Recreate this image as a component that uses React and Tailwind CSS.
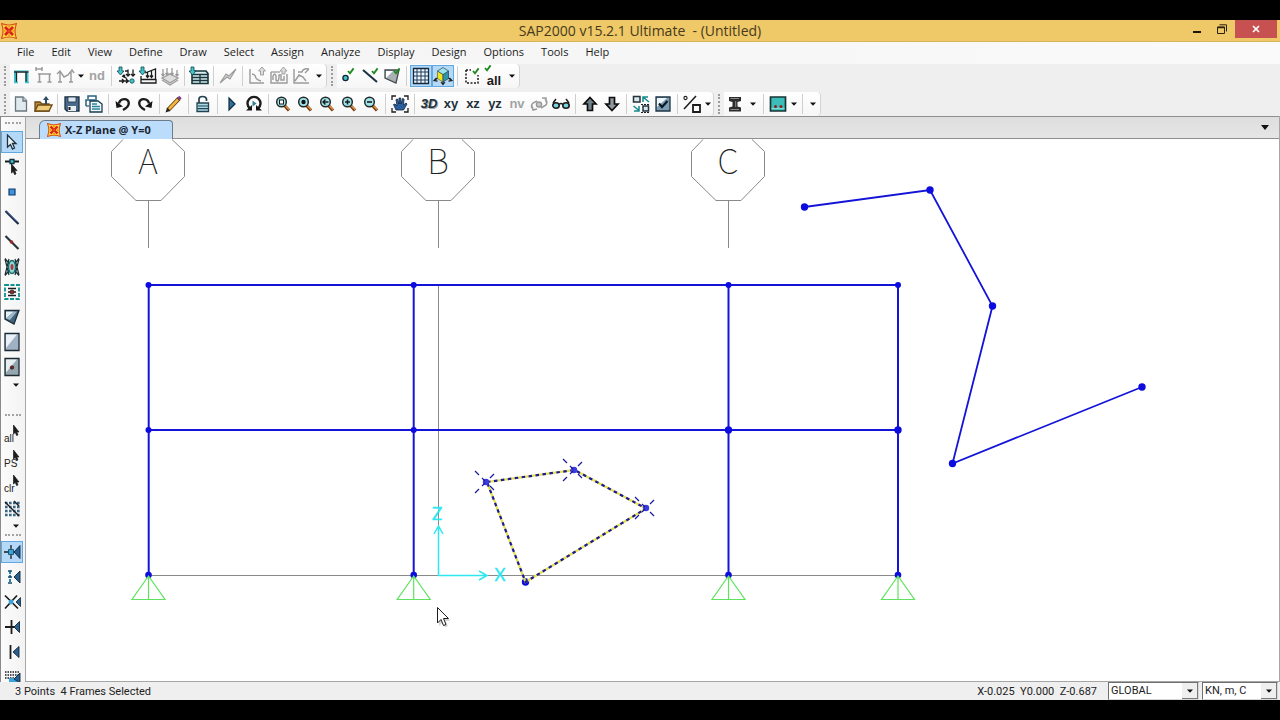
import React from "react";

/* ---------- small drawing helpers ---------- */
const Ico = ({ children }) => (
  <svg viewBox="0 0 20 20" className="block h-5 w-5 shrink-0" fill="none" stroke="#1c1c1c" strokeWidth="1.3" aria-hidden="true">
    {children}
  </svg>
);
const G = "#9a9a9a";
const CY = "#3fc4cc";
const down = (x, y, c = CY, s = "#14464c") => (
  <path d={`M${x + 2} ${y}h3v4h2l-3.5 4l-3.5 -4h2z`} fill={c} stroke={s} strokeWidth="0.8" />
);
const check = (x, y) => <path d={`M${x} ${y + 2}l2 2.4l3.6 -5`} stroke="#1d8a1d" strokeWidth="1.8" />;

const Logo = ({ className = "h-4 w-4" }) => (
  <svg viewBox="0 0 16 16" className={`block shrink-0 ${className}`} aria-hidden="true">
    <path d="M0.5 0.5Q8 3.5 15.5 0.5Q12.5 8 15.5 15.5Q8 12.5 0.5 15.5Q3.5 8 0.5 0.5Z" fill="#ffd83c" stroke="#d9531e" strokeWidth="1.2" />
    <path d="M4 4L12 12M12 4L4 12" stroke="#d8231c" strokeWidth="2.8" />
    <path d="M8 1.8L9.6 4.6H6.4ZM8 14.2L6.4 11.4H9.6ZM1.8 8L4.6 6.4V9.6ZM14.2 8L11.4 9.6V6.4Z" fill="#f59a22" />
    <circle cx="8" cy="8" r="1.6" fill="#e8481e" />
  </svg>
);

const Caret = () => (
  <svg viewBox="0 0 6 4" className="block h-1 w-1.5" aria-hidden="true">
    <path d="M0 0.5H6L3 3.8Z" fill="#111" />
  </svg>
);

const lens = (inner) => (
  <>
    <path d="M11.5 11.5L16 16.5" stroke="#7a3d12" strokeWidth="3.2" />
    <path d="M12 11.4L16 15.600" stroke="#f0a050" strokeWidth="1.2" />
    <circle cx="8.5" cy="8" r="4.8" fill="#9fe6ea" stroke="#24292c" strokeWidth="1.5" />
    {inner}
  </>
);

const icons = {
  /* define and assign row */
  portal: <><path d="M4.500 16V6.500M16 16V6.500" stroke={CY} strokeWidth="3" /><path d="M3 5H17.500" stroke={CY} strokeWidth="1.200" /><path d="M3 6H17.500M5.500 6V16M15 6V16" stroke="#17262b" /><path d="M3 16.500h4M14 16.500h4" stroke={CY} strokeWidth="1.500" /></>,
  dimPortal: <path d="M3 3H9M3 1V5M9 1V5M5 8H18M6.5 8V16M16.5 8V16M4.5 16h4M14.5 16h4" stroke={G} strokeWidth="1.5" />,
  wave: <path d="M2 8L5 5L9 11L13 9L17 4L19 7M5 6V16M16 6V16M3 16h4M14 16h4" stroke={G} strokeWidth="1.4" />,
  loads: <>{down(1, 1)}<path d="M9 5H12M12 3.500V9.500M17 3.500V9.500M10 8l2 2l2 -2M15 8l2 2l2 -2M6 10L11 12.500M3 15H12M10 13l2.500 2l-2.500 2M6 13l2 2l-2 2" stroke="#1c1c1c" /><circle cx="8" cy="10" r="1.400" fill="#1c1c1c" stroke="none" /><circle cx="16" cy="15" r="2.200" fill={CY} stroke="#14464c" strokeWidth="0.8" /></>,
  frameLoad: <>{down(1, 1)}<path d="M3 10V17H18V13M3 13.500H18M7 7L17.500 3V13.500M9.500 6.500V11M13.500 5V11M8 9.500l1.500 2l1.500 -2M12 9.500l1.500 2l1.500 -2" /></>,
  areaLoad: <><path d="M2 12L10 8L18 12L10 17Z" fill="#dedede" stroke={G} /><path d="M2 14L10 19L18 14" stroke={G} /><path d="M3 3V10M7 2V9M12 2V9M17 4V10M1.500 8l1.500 2l1.500 -2M5.500 7l1.500 2l1.500 -2M10.500 7l1.500 2l1.500 -2M15.500 8l1.500 2l1.500 -2" stroke={G} /></>,
  table: <><path d="M3 5H17L19 7.500V17.500H3Z" fill="#d9edf0" stroke="#17363b" strokeWidth="1.6" /><path d="M3 8.500H19M3 11.500H19M3 14.500H19M11 8V17" stroke="#17363b" strokeWidth="1.300" />{down(0, 1)}</>,
  bolt: <path d="M2 17L8 8L11 10L18 3L12 13L9 11Z" fill="#d5d5d5" stroke={G} strokeWidth="1.100" />,
  chartA: <><path d="M3 3V17H17M5 8Q8 8 9 12Q10 14 14 15" stroke={G} strokeWidth="1.400" /><path d="M15 1l3.500 4h-2v4h-3V5h-2z" fill="#ddd" stroke={G} strokeWidth="0.900" /></>,
  chartB: <><path d="M2 6V17H18V8M4 14V10Q6 6 7 10V14Q9 17 10 12V9H12V14H15V10" stroke={G} strokeWidth="1.400" /><path d="M14.500 1l3.500 4h-2v3h-3V5h-2z" fill="#ddd" stroke={G} strokeWidth="0.900" /><path d="M2 6H11" stroke={G} /></>,
  chartC: <path d="M3 3V17H18M4 15L8 9L12 11L15 15M7 6H11Q12 2 18 3M18 3l-4 4" stroke={G} strokeWidth="1.400" />,
  pointCheck: <>{check(10, 3)}<circle cx="7.500" cy="12" r="2.600" fill={CY} stroke="#123" strokeWidth="1.300" /></>,
  lineCheck: <><path d="M3 4L17 16" stroke="#18303f" strokeWidth="2" />{check(12, 3)}</>,
  areaCheck: <><path d="M3 4H17L14 17L3 12Z" fill="#aab1b5" stroke="#454b4f" /><path d="M4 5H11L4 12Z" fill="#fff" stroke="none" />{check(12, 3)}</>,
  grid: <><path d="M2.500 2.500H17.500V17.500H2.500Z" fill="#eef7ff" stroke="#14283c" /><path d="M6 3V17M10 3V17M14 3V17M3 6H17M3 10H17M3 14H17" stroke="#1e3b57" strokeWidth="1" /></>,
  cube: <><path d="M10 9V18M5 12L1 14.500M15 12L19 14.500M3.500 12l-2.500 2.500l3.500 .6M16.500 12l2.500 2.500l-3.500 .6M8 16l2 2.500l2 -2.500" strokeWidth="1.100" /><path d="M4.500 5L10 8.500V16L4.500 12.500Z" fill="#f4e21c" stroke="#5d6a2c" strokeWidth="0.700" /><path d="M10 8.500L15.500 5V12.500L10 16Z" fill="#2d96a8" stroke="#27434f" strokeWidth="0.700" /><path d="M4.500 5L10 1.500L15.500 5L10 8.500Z" fill="#9fe3ef" stroke="#27434f" strokeWidth="0.700" /></>,
  dashCheck: <><path d="M4 4V17H16V9M4 4H9" strokeDasharray="2 1.500" strokeWidth="1.500" />{check(11, 3)}</>,
  /* file and view row */
  newDoc: <><path d="M4.500 3H12L15.500 6.500V17H4.500Z" fill="#dfe9ee" stroke="#69767e" /><path d="M12 3V7H16" fill="#c4d5de" stroke="#69767e" /></>,
  open: <><path d="M2 8H7L9 10H16V17H2Z" fill="#b98a38" stroke="#6c4b17" /><path d="M2 17L5 11H19L16 17Z" fill="#f0cc79" stroke="#6c4b17" /><path d="M12 10V6h-2l3 -4l3 4h-2v4z" fill="#2d4b63" stroke="none" /></>,
  save: <><path d="M3 3H17V17H5L3 15Z" fill="#4a6a8c" stroke="#1d3143" /><path d="M6 3H14V8H6Z" fill="#dbe7f1" stroke="#1d3143" strokeWidth="0.800" /><path d="M6 12H14V17H6Z" fill="#e9eef2" stroke="none" /><path d="M7.500 13V16" strokeWidth="2" /></>,
  print: <><path d="M4 5V2H12V5M2 12V6H13" stroke="#29607a" strokeWidth="1.500" /><path d="M2 12H5" stroke="#29607a" /><path d="M6 7H14L18 10V18H6Z" fill="#f2f9fc" stroke="#173e50" /><path d="M8 10H13M8 12.500H16M8 15H16" stroke="#2b8399" /></>,
  undo: <><path d="M6 9.500C7 4 15.500 3.500 15.800 9C15.800 12.500 13 14.500 10 16" strokeWidth="2.400" /><path d="M2.500 7L10 12.500L3.500 14Z" fill="#141414" stroke="none" /></>,
  redo: <><path d="M14 9.500C13 4 4.500 3.500 4.200 9C4.200 12.500 7 14.500 10 16" strokeWidth="2.400" /><path d="M17.500 7L10 12.500L16.500 14Z" fill="#141414" stroke="none" /></>,
  pencil: <><path d="M4 16L15 4.500" stroke="#5a3a10" strokeWidth="4.200" /><path d="M5 15L14 5.500" stroke="#f5b83c" strokeWidth="2.600" /><path d="M14.500 5L16.500 3" stroke="#7d3b97" strokeWidth="3.400" /><path d="M1.500 18.500L3 14L6 17Z" fill="#222" stroke="none" /></>,
  lock: <><path d="M6 9V5Q6 2.500 9.500 2.500T13.500 5V7" stroke="#24414f" strokeWidth="1.700" /><path d="M4 9H15.500V17.500H4Z" fill="#a9dbe8" stroke="#24414f" /><path d="M4.500 12H15M4.500 14.700H15" stroke="#24414f" strokeWidth="1.200" /></>,
  play: <path d="M7 4L13 10L7 16Z" fill="#2f6f9c" stroke="#0f2a3e" strokeWidth="1.200" />,
  runAll: <><path d="M6 14.500A6.500 6.500 0 1 1 14 14.500" strokeWidth="2.400" /><path d="M2 16.500H8V11ZM18 16.500H12V11Z" fill="#141414" stroke="none" /><path d="M8.500 6.500L12.500 9.500L8.500 12.500Z" fill="#2d8390" stroke="none" /></>,
  zoomBox: lens(<rect x="6.500" y="6" width="4" height="4" fill="#fff" strokeWidth="1" />),
  zoomFull: lens(<circle cx="8.500" cy="8" r="2.200" fill="#111" stroke="none" />),
  zoomPrev: lens(<path d="M11.500 8H6M8.500 5.500L6 8L8.500 10.500" strokeWidth="1.400" />),
  zoomIn: lens(<path d="M8.500 5.500V10.500M6 8H11" strokeWidth="1.500" />),
  zoomOut: lens(<path d="M6 8H11" strokeWidth="1.600" />),
  pan: <><path d="M2 6V2H6M14 2H18V6M18 14V18H14M6 18H2V14" strokeWidth="1.300" /><path d="M6 16L3.500 10.500L5 10L7 12L6 5.500L7.500 5L9 10V4H10.700L11.200 10L12.500 4.500L14 5L13.500 11L16 9L17 10L13.500 16Z" fill="#2a5f9e" stroke="#11253d" strokeWidth="0.800" /></>,
  orbit: <><path d="M4 15Q1 12 4 9L8 7M12 14L17 11Q19 8 16 5M3 12l1 4l4 -1M17 8V4H13" stroke={G} strokeWidth="1.500" /><circle cx="10" cy="10.500" r="2.500" fill="#ccc" stroke={G} strokeWidth="1.500" /></>,
  glasses: <><path d="M2 9L5 5M18 9L15 5M8 10.500Q10 8.500 12 10.500" strokeWidth="1.500" /><ellipse cx="5" cy="11.500" rx="3.200" ry="2.700" fill="#77d3dd" strokeWidth="1.600" /><ellipse cx="15" cy="11.500" rx="3.200" ry="2.700" fill="#77d3dd" strokeWidth="1.600" /></>,
  up: <path d="M10 3.500L16 10H12.500V16.500H7.500V10H4Z" fill="#73838b" stroke="#0d0d0d" strokeWidth="1.700" />,
  dn: <path d="M10 16.500L16 10H12.500V3.500H7.500V10H4Z" fill="#8f9aa0" stroke="#0d0d0d" strokeWidth="1.700" />,
  swap: <><path d="M2.500 2.500H9V8H2.500ZM12 12H17.500V17H12Z" fill="#dbe8ec" stroke="#22333c" strokeWidth="1.500" /><path d="M18 8L12.500 3.500M12 8V3H17M2.500 12L8 16.500M8 12V17H3" stroke="#128a8c" strokeWidth="1.500" /><path d="M10 10.500H19M10 18.500H19" strokeWidth="1" strokeDasharray="2 1" /></>,
  option: <><path d="M3 3H17V17H3Z" fill="#7d9db5" stroke="#1e3445" /><path d="M4 4H14L4 13Z" fill="#eef5f9" stroke="none" /><path d="M6 9.500L9 13L14.500 7" strokeWidth="2.200" stroke="#0c1a26" /></>,
  percent: <><path d="M2 15L14 2" strokeWidth="1.500" /><circle cx="3.500" cy="4" r="1.600" strokeWidth="1.100" /><path d="M11 11H18V18H11Z" fill="#fff" strokeWidth="1.800" /></>,
  beam: <><path d="M4 3H16V7L12.500 8V12.500L16 13.500V17.500H4V13.500L7.500 12.500V8L4 7Z" fill="#2c2c2c" stroke="none" /><path d="M5.500 4.500H14M5.500 15.500H14M10.700 7V13" stroke="#8a8a8a" strokeWidth="1" /></>,
  rebar: <><path d="M2.500 3H17.500V17H2.500Z" fill="#3dbdb9" stroke="#173433" strokeWidth="1.700" /><path d="M3.500 14.500H16.500" stroke="#7fdcd8" /><circle cx="7.500" cy="12.500" r="1.500" fill="#8c1e1e" stroke="none" /><circle cx="13" cy="12.500" r="1.500" fill="#8c1e1e" stroke="none" /></>,
  /* side bar */
  pointer: <path d="M5.500 3V15L8.500 12.500L10.500 17L12.500 16L10.500 11.500H14Z" fill="#eef3f6" stroke="#1d3140" strokeWidth="1.300" />,
  reshape: <><path d="M3 4.500H17" strokeWidth="2" /><path d="M8 2.500H12V6.500H8Z" fill={CY} stroke="#134" /><path d="M9.500 7V16L11.300 14.300L12.500 17.500L14 17L12.700 13.600H15Z" fill="#1c1c1c" strokeWidth="0.800" /></>,
  joint: <path d="M7 7H13V13H7Z" fill="#3d93e0" stroke="#123a6b" strokeWidth="1.200" />,
  frame: <><path d="M3.500 4L16.500 17" stroke="#1d2a44" strokeWidth="2.200" /><path d="M4.500 4L15 14.500" stroke="#5a7fd0" strokeWidth="0.900" /></>,
  quickFrame: <><path d="M3.500 4L16.500 17" stroke="#27363c" strokeWidth="2.200" /><circle cx="9.500" cy="10" r="1.800" fill="#a0262b" stroke="none" /></>,
  brace: <><path d="M3 1.500L17 18.500M17 1.500L3 18.500M3 2L7 18M17 2L13 18M3 18L7 2M17 18L13 2" stroke="#1c2f33" strokeWidth="1.200" /><ellipse cx="10" cy="10" rx="3.500" ry="6.500" fill="#8fdad9" stroke="#176b6b" /><ellipse cx="10" cy="10" rx="1.500" ry="3" fill="#b3373b" stroke="none" /></>,
  secondary: <><path d="M3 3H17V17H3Z" stroke="#11908f" strokeWidth="1.800" strokeDasharray="4 1.500" /><path d="M6 6.500H14M6 13.500H14M6 10H14" strokeWidth="1.300" /><circle cx="10" cy="10" r="2" fill="#a0262b" stroke="#222" strokeWidth="0.800" /></>,
  poly: <><path d="M3 3.500H17L12 17L3 12Z" fill="#41637c" stroke="#1d2c36" /><path d="M4 4.500H12L4 11.500Z" fill="#e6f0f5" stroke="none" /><path d="M12 4.500H15L8 13L4 11.500Z" fill="#9db8c9" stroke="none" /></>,
  rect: <><path d="M3 1.500H17V18.500H3Z" fill="#9fb1c3" stroke="#1c2a37" strokeWidth="1.300" /><path d="M4 2.500H15L4 16Z" fill="#e9f0f7" stroke="none" /></>,
  quickArea: <><path d="M3 1.500H17V18.500H3Z" fill="#94a7ae" stroke="#1c2a30" strokeWidth="1.300" /><path d="M4 2.500H15L4 15.500Z" fill="#e6eef0" stroke="none" /><circle cx="10" cy="10.500" r="1.800" fill="#7c1f24" stroke="#222" strokeWidth="0.600" /></>,
  diagSelect: <><path d="M3 4H18M3 8H18M3 12H18M3 16H18" stroke="#3a6686" strokeWidth="2.400" strokeDasharray="2.600 1.400" /><path d="M3 3L17 17M12 2L17 7" strokeWidth="1.400" /></>,
  snapPoint: <><path d="M2 10H15M9 3V7M9 13V17" strokeWidth="1.300" /><path d="M6.500 7.500H11.500V12.500H6.500Z" fill="#3aa3dc" stroke="#18506f" strokeWidth="0.900" /><path d="M18 3.500V16.500L12 10Z" fill="#285f8e" stroke="#0f2536" strokeWidth="0.900" /></>,
  snapMid: <><path d="M8 4V16" stroke="#2b83ad" strokeWidth="2" strokeDasharray="3 1" /><path d="M6 4H10M6 16H10M6 10H10" stroke="#174d68" /><path d="M18 4V16L12 10Z" fill="#285f8e" stroke="#0f2536" strokeWidth="0.900" /></>,
  snapCross: <><path d="M3 3.500L16 16.500M15 3.500L3 16.500" strokeWidth="1.700" /><circle cx="9" cy="10" r="2.400" fill="#3aa3dc" stroke="none" /><path d="M18.500 5.500V14.500L14 10Z" fill="#285f8e" stroke="#0f2536" strokeWidth="0.800" /></>,
  snapPerp: <><path d="M3 10H13M9.500 3V17" strokeWidth="1.800" /><path d="M17.500 4.500V15.500L12 10Z" fill="#285f8e" stroke="#0f2536" strokeWidth="0.900" /></>,
  snapLine: <><path d="M8.500 3V17" strokeWidth="1.800" /><path d="M17 4.500V15.500L11 10Z" fill="#285f8e" stroke="#0f2536" strokeWidth="0.900" /></>,
  snapGrid: <><path d="M3 5H17M3 8H17M3 11H17" strokeWidth="1.300" strokeDasharray="1.500 1" /><path d="M7 11H15V16H7Z" fill="#3aa3dc" stroke="none" /><path d="M18 6V16L12 12Z" fill="#285f8e" stroke="#0f2536" strokeWidth="0.900" /></>,
};

const cursor = <path d="M12.500 2V11L14.300 9.400L15.600 12.500L17 12L15.800 9H18Z" fill="#1c1c1c" strokeWidth="0.700" />;

/* ---------- toolbar pieces ---------- */
const Btn = ({ name, label, active }) => (
  <button
    type="button"
    aria-label={label}
    className={`flex h-[22px] w-[22px] shrink-0 items-center justify-center ${active ? "bg-[#b4d9f8] outline-1 -outline-offset-1 outline-[#5fa8e0]" : ""}`}
  >
    <Ico>{icons[name]}</Ico>
  </button>
);
const Txt = ({ children, dim, slant }) => (
  <button
    type="button"
    className={`flex h-[22px] w-[22px] shrink-0 items-center justify-center font-['Liberation_Sans',sans-serif] text-[13px] leading-4 font-bold ${dim ? "text-[#a3a3a3]" : "text-[#22303a]"} ${slant ? "italic [text-shadow:1px_1px_0_#9aa5ab]" : ""}`}
  >
    {children}
  </button>
);
const Sep = () => <div className="mx-[3px] h-5 w-px shrink-0 bg-[#cfcfcf]" />;
const Drop = ({ label, wide }) => (
  <button type="button" aria-label={label} className={`flex h-[22px] shrink-0 items-center justify-center ${wide ? "w-3.5" : "w-2.5"}`}>
    <Caret />
  </button>
);
const Grip = () => (
  <div className="flex w-2.5 shrink-0 items-center justify-center">
    <div className="h-5 border-l-2 border-dotted border-[#9c9c9c]" />
  </div>
);
const Band = ({ children }) => (
  <div className="flex h-6 items-center rounded-r-sm border-r border-[#d4d4d4] bg-gradient-to-b from-white to-[#f6f6f6]">{children}</div>
);
const render = (items) =>
  items.map((it, i) => {
    if (it === "|") return <Sep key={i} />;
    if (it[0] === "v") return <Drop key={i} label={it[1]} wide={it[2]} />;
    if (it[0] === "t") return <Txt key={i} dim={it[2]} slant={it[3]}>{it[1]}</Txt>;
    return <Btn key={i} name={it[0]} label={it[1]} active={it[2]} />;
  });

const row1a = [
  ["portal", "Materials"], ["dimPortal", "Frame sections"], ["wave", "Area sections"], ["v", "More sections"], ["t", "nd", true], "|",
  ["loads", "Joint loads"], ["frameLoad", "Frame loads"], ["areaLoad", "Area loads"], "|",
  ["table", "Tables"], "|", ["bolt", "Hinges"], "|",
  ["chartA", "Response"], ["chartB", "Time history"], ["chartC", "Pushover"], ["v", "More results", true],
];
const row1b = [
  ["pointCheck", "Point labels"], ["lineCheck", "Line labels"], ["areaCheck", "Area labels"], "|",
  ["grid", "Show grid", true], ["cube", "Show axes", true], "|", ["dashCheck", "Show selection"],
];
const row2a = [
  ["newDoc", "New"], ["open", "Open"], "|", ["save", "Save"], ["print", "Print"], "|", ["undo", "Undo"], ["redo", "Redo"], "|",
  ["pencil", "Edit"], "|", ["lock", "Lock model"], "|", ["play", "Run"], ["runAll", "Run analysis"], "|",
  ["zoomBox", "Zoom window"], ["zoomFull", "Zoom full"], ["zoomPrev", "Zoom previous"], ["zoomIn", "Zoom in"], ["zoomOut", "Zoom out"], "|",
  ["pan", "Pan"], "|",
  ["t", "3D", false, true], ["t", "xy"], ["t", "xz"], ["t", "yz"], ["t", "nv", true], ["orbit", "Rotate"], ["glasses", "Perspective"], "|",
  ["up", "Move up"], ["dn", "Move down"], "|", ["swap", "Shrink objects"], ["option", "Display options"], "|", ["percent", "Assign to group"], ["v", "More"],
];
const row2b = [["beam", "Steel design"], ["v", "Steel design menu", true], "|", ["rebar", "Concrete design"], ["v", "Concrete design menu"], "|", ["v", "Toolbar options", true]];

const menus = ["File", "Edit", "View", "Define", "Draw", "Select", "Assign", "Analyze", "Display", "Design", "Options", "Tools", "Help"];

/* ---------- side bar pieces ---------- */
const Side = ({ name, label, active }) => (
  <div className="flex h-[25px] shrink-0 items-center">
    <Btn name={name} label={label} active={active} />
  </div>
);
const SideGrip = ({ className = "h-3" }) => (
  <div className={`flex shrink-0 items-center px-1 ${className}`}>
    <div className="w-full border-t-2 border-dotted border-[#a4a4a4]" />
  </div>
);
const SideText = ({ children }) => (
  <div className="flex h-[25px] shrink-0 items-center">
    <button type="button" className="relative flex h-[22px] w-[22px] items-end font-['Liberation_Sans',sans-serif] text-[10px] leading-3 text-[#222]">
      <span className="pl-[3px]">{children}</span>
      <span className="absolute top-0 left-0"><Ico>{cursor}</Ico></span>
    </button>
  </div>
);

/* ---------- model drawing ---------- */
const BL = "#1414d8";
const joints = [
  [148.5, 285, 3], [413.7, 285, 3], [728.5, 285, 3], [898, 285, 3],
  [148.5, 430, 3], [413.7, 430, 3], [728.5, 430, 3.7], [898, 430, 3.7],
  [148.5, 575, 3.3], [413.7, 575, 3.3], [728.5, 575, 3.3], [898, 575, 3.3],
  [804.5, 207, 3.7], [930, 190, 3.7], [992.5, 306, 3.7], [952.5, 463.5, 3.7], [1142, 387, 3.7],
];
const flags = [[148, "A"], [438, "B"], [728, "C"]];
const Spark = ({ x, y }) => (
  <g>
    <circle cx={x} cy={y} r="3.200" fill="#3b3be0" />
    <path d={`M${x - 11} ${y - 11}l4 4M${x - 11} ${y + 11}l4 -4M${x + 8} ${y - 8}l-4 4M${x + 8} ${y + 8}l-4 -4M${x - 4} ${y - 4}l3 3M${x - 4} ${y + 4}l3 -3`} stroke="#1a1aa0" strokeWidth="1.200" />
  </g>
);

const Model = () => (
  <svg viewBox="26 139 1253 542" className="block h-full w-full overflow-visible" fill="none" role="img" aria-label="Frame model, X-Z plane">
    <g stroke="#8a8a8a" strokeWidth="1">
      {flags.map(([x, n]) => (
        <g key={n}>
          <path d={`M${x - 25} 139.500L${x - 36.500} 151.500V176.500L${x - 12} 200.500H${x + 13}L${x + 36.500} 176.500V151.500L${x + 24} 139.500M${x + 0.500} 200V248`} />
          <text x={x} y="174" textAnchor="middle" fill="#222" stroke="none" className="font-['Noto_Sans_CJK_JP',sans-serif] text-[34px] font-thin">{n}</text>
        </g>
      ))}
      <path d="M438.500 285V575M148 575.500H898" />
    </g>
    <g stroke={BL} strokeWidth="2">
      <path d="M148 285H898M148 430H898M148.700 285V575M413.700 285V575M728.500 285V575M898 285V575" />
      <path d="M804.500 207L930 190L992.500 306L952.500 463.500L1142 387" strokeWidth="1.800" />
    </g>
    {joints.map(([x, y, r], i) => <circle key={i} cx={x} cy={y} r={r} fill="#0c0ce0" />)}
    {[148.5, 413.7, 728.5, 898].map((x) => (
      <path key={x} d={`M${x} 576L${x - 16.500} 599.500H${x + 16.500}ZM${x} 576V599`} stroke="#5fe35f" strokeWidth="1.200" />
    ))}
    <g stroke="#2de8f0" strokeWidth="1.500">
      <path d="M438.500 526V575.500H487M434 534L438.500 526L443 534M479 571L487 575.500L479 580" />
      <text x="437" y="520" textAnchor="middle" fill="#2de8f0" strokeWidth="0.400" className="font-['Lato',sans-serif] text-[17px]">Z</text>
      <text x="500" y="581" textAnchor="middle" fill="#2de8f0" strokeWidth="0.400" className="font-['Lato',sans-serif] text-[17px]">X</text>
    </g>
    <circle cx="525.500" cy="582" r="3.700" fill="#0c0ce0" />
    <path d="M487 482L574.500 470L646 508.500L525.500 582Z" stroke="#e6e04e" strokeWidth="2.200" />
    <path d="M487 482L574.500 470L646 508.500L525.500 582Z" stroke="#1a1a9c" strokeWidth="2.200" strokeDasharray="3.500 3.500" />
    <Spark x={486} y={482} />
    <Spark x={574} y={470} />
    <Spark x={646} y={508} />
    <path d="M439 610V626L442.500 622.500L445 627.500L448 626L445.500 621H450.500Z" fill="#999" opacity="0.400" />
    <path d="M437.500 607.500V623L441 619.500L443.500 625.500L446 624.500L443.500 618.500H448.500Z" fill="#fff" stroke="#1c1c1c" strokeWidth="1" />
  </svg>
);

const Combo = ({ id, label, options, className }) => (
  <div className={`relative h-[18px] shrink-0 border border-[#d8d8d8] border-t-[#6f6f6f] border-l-[#6f6f6f] bg-white ${className}`}>
    <label htmlFor={id} className="sr-only">{label}</label>
    <select id={id} className="block h-4 w-full appearance-none bg-white pl-0.5 text-[11px] leading-normal text-[#222] outline-none">
      {options.map((o) => <option key={o}>{o}</option>)}
    </select>
    <span className="pointer-events-none absolute inset-y-0 right-0 flex w-4 items-center justify-center border-r border-b border-[#7a7a7a] bg-[#efefef]">
      <Caret />
    </span>
  </div>
);

export default function App() {
  return (
    <div className="flex h-screen flex-col bg-black font-['Open_Sans','Noto_Sans',sans-serif] text-[#222]">
      <div className="h-5 shrink-0" />
      <div className="flex min-h-0 flex-1 flex-col bg-[#efefef]">
        <header className="grid h-[22px] shrink-0 grid-cols-[1fr_auto_1fr] items-center border-b border-[#d6b45c] bg-[#efc868]">
          <div className="pl-px"><Logo /></div>
          <h1 className="text-[14px] leading-5 whitespace-pre text-[#463a1c]">SAP2000 v15.2.1 Ultimate  - (Untitled)</h1>
          <div className="flex h-full items-start justify-end pr-[3px]">
            <button type="button" aria-label="Minimize" className="flex h-[18px] w-6 items-center justify-center">
              <svg viewBox="0 0 10 10" className="h-2.5 w-2.5"><path d="M1 7H9V9H1Z" fill="#1c1608" /></svg>
            </button>
            <button type="button" aria-label="Restore" className="flex h-[18px] w-[26px] items-center justify-center">
              <svg viewBox="0 0 10 10" className="h-2.5 w-2.5" fill="none" stroke="#2b220c"><path d="M0.500 3H7.500V9.500H0.500Z" /><path d="M0.500 3.500H7.500" strokeWidth="1.500" /><path d="M2.500 0.800H9.500V7.500" /></svg>
            </button>
            <button type="button" aria-label="Close" className="flex h-[18px] w-[42px] items-center justify-center bg-[#c75050]">
              <svg viewBox="0 0 10 10" className="h-2.5 w-2.5"><path d="M2 2L8 8M8 2L2 8" stroke="#fff" strokeWidth="1.700" /></svg>
            </button>
          </div>
        </header>

        <nav className="flex h-[22px] shrink-0 items-center gap-[17px] bg-gradient-to-r from-[#f3f3f3] to-[#fafafa] pb-0.5 pl-[17px]">
          {menus.map((m) => (
            <button key={m} type="button" className="text-[11px] leading-4 text-[#1c1c1c]">{m}</button>
          ))}
        </nav>

        <div className="flex shrink-0 flex-col gap-1">
          <div className="flex h-6 items-center">
            <Grip />
            <Band>{render(row1a)}</Band>
            <Grip />
            <Band>
              {render(row1b)}
              <button type="button" className="relative flex h-[22px] w-[22px] items-end justify-center font-['Liberation_Sans',sans-serif] text-[13px] leading-3 font-bold text-[#1c1c1c]">
                all
                <span className="absolute -top-0.5 -left-1"><Ico>{check(6, 3)}</Ico></span>
              </button>
              {render([["v", "More display options", true]])}
            </Band>
          </div>
          <div className="flex h-6 items-center">
            <Grip />
            <Band>{render(row2a)}</Band>
            <Grip />
            <Band>{render(row2b)}</Band>
          </div>
        </div>

        <main className="flex min-h-0 flex-1">
          <aside className="flex w-[25px] shrink-0 flex-col overflow-hidden border-t border-l border-[#8a8a8a] bg-gradient-to-r from-[#fbfbfb] to-[#f3f3f3]">
            <SideGrip />
            <Side name="pointer" label="Select object" active />
            <Side name="reshape" label="Reshape" />
            <Side name="joint" label="Draw joint" />
            <Side name="frame" label="Draw frame" />
            <Side name="quickFrame" label="Quick draw frame" />
            <Side name="brace" label="Quick draw braces" />
            <Side name="secondary" label="Quick draw secondary beams" />
            <Side name="poly" label="Draw poly area" />
            <Side name="rect" label="Draw rectangular area" />
            <Side name="quickArea" label="Quick draw area" />
            <button type="button" aria-label="More draw tools" className="flex h-3 shrink-0 items-center justify-center pl-1.5"><Caret /></button>
            <div className="h-[18px] shrink-0" />
            <SideGrip />
            <SideText>all</SideText>
            <SideText>PS</SideText>
            <SideText>clr</SideText>
            <Side name="diagSelect" label="Intersecting line select" />
            <button type="button" aria-label="More select tools" className="flex h-2.5 shrink-0 items-center justify-center pl-1.5"><Caret /></button>
            <SideGrip className="h-2" />
            <Side name="snapPoint" label="Snap to points" active />
            <Side name="snapMid" label="Snap to midpoints" />
            <Side name="snapCross" label="Snap to intersections" />
            <Side name="snapPerp" label="Snap to perpendicular" />
            <Side name="snapLine" label="Snap to lines" />
            <Side name="snapGrid" label="Snap to fine grid" />
          </aside>

          <section className="flex min-w-0 flex-1 flex-col border-r border-b border-l border-[#a6a6a6]">
            <div className="flex h-[23px] shrink-0 items-end border-t border-[#8f8f8f] bg-gradient-to-b from-[#dedede] to-[#e6e6e6]">
              <div className="w-[13px] border-b border-[#8f8f8f]" />
              <button type="button" className="flex h-[19px] w-[134px] items-center gap-1 rounded-tl-md rounded-tr border border-b-0 border-[#6d7c8c] bg-[#bcdcfb] pl-[7px]">
                <Logo className="h-3.5 w-3.5" />
                <span className="text-[11px] leading-4 font-bold whitespace-nowrap text-[#1c2733]">X-Z Plane @ Y=0</span>
              </button>
              <div className="flex h-full flex-1 items-center justify-end border-b border-[#8f8f8f] pr-2.5">
                <button type="button" aria-label="Window list">
                  <svg viewBox="0 0 8 5" className="h-[5px] w-2"><path d="M0 0H8L4 5Z" fill="#111" /></svg>
                </button>
              </div>
            </div>
            <div className="min-h-0 flex-1 bg-white"><Model /></div>
          </section>
        </main>

        <footer className="flex h-[18px] shrink-0 items-end gap-[3px] pr-0.5 pl-[15px] font-['Roboto',sans-serif] text-[11px] leading-4">
          <p className="whitespace-pre">3 Points  4 Frames Selected</p>
          <p className="ml-auto pr-2 whitespace-pre">X-0.025  Y0.000  Z-0.687</p>
          <Combo id="csys" label="Coordinate system" options={["GLOBAL", "LOCAL"]} className="w-[91px]" />
          <Combo id="units" label="Units" options={["KN, m, C", "N, mm, C"]} className="w-[76px]" />
        </footer>
      </div>
      <div className="h-5 shrink-0" />
    </div>
  );
}
